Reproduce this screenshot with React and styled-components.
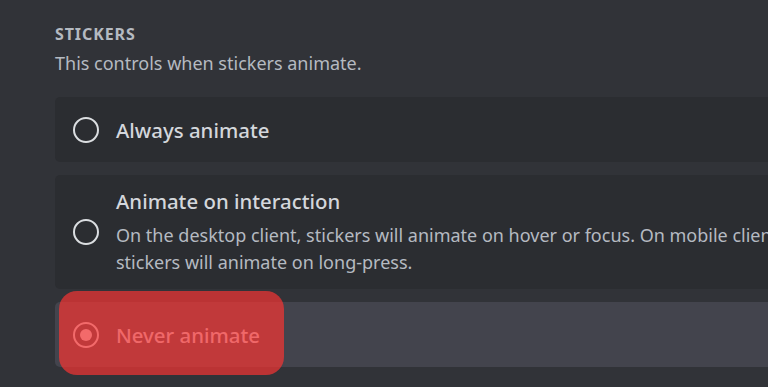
import React from "react";
import styled, { createGlobalStyle } from "styled-components";

const GlobalStyle = createGlobalStyle`
  html, body {
    margin: 0;
    padding: 0;
    background: #313338;
    overflow: hidden;
  }
  body {
    font-family: "Noto Sans", "Open Sans", sans-serif;
  }
`;

const options = [
  { id: "always", title: "Always animate" },
  {
    id: "interaction",
    title: "Animate on interaction",
    desc: "On the desktop client, stickers will animate on hover or focus. On mobile clients, stickers will animate on long-press.",
  },
  { id: "never", title: "Never animate", selected: true, marked: true },
];

const App = () => {
  return (
    <>
      <GlobalStyle />
      <Page>
        <Heading>Stickers</Heading>
        <Description>This controls when stickers animate.</Description>
        <OptionList>
          {options.map((o) => (
            <Option key={o.id} $selected={o.selected} $tall={!!o.desc}>
              <Radio $selected={o.selected}>{o.selected && <Dot />}</Radio>
              <OptionText>
                <OptionTitle>{o.title}</OptionTitle>
                {o.desc && <OptionDesc>{o.desc}</OptionDesc>}
              </OptionText>
              {o.marked && <Highlight />}
            </Option>
          ))}
        </OptionList>
      </Page>
    </>
  );
};

const Page = styled.div`
  width: 768px;
  height: 387px;
  box-sizing: border-box;
  padding: 24px 0 0 55px;
  overflow: hidden;
`;

const Heading = styled.h2`
  margin: 0;
  font-size: 16px;
  font-weight: 700;
  text-transform: uppercase;
  letter-spacing: 0.9px;
  color: #b5bac1;
  line-height: 20px;
`;

const Description = styled.div`
  margin-top: 7px;
  font-size: 18px;
  line-height: 24px;
  color: #b5bac1;
`;

const OptionList = styled.div`
  margin-top: 22px;
  display: flex;
  flex-direction: column;
  gap: 13px;
  width: 760px;
`;

const Option = styled.div`
  position: relative;
  display: flex;
  align-items: center;
  gap: 17px;
  box-sizing: border-box;
  min-height: ${(p) => (p.$tall ? "114px" : "65px")};
  padding: 0 18px;
  border-radius: 5px;
  background: ${(p) => (p.$selected ? "#43444d" : "#2b2d31")};
`;

const Radio = styled.div`
  flex: none;
  width: 26px;
  height: 26px;
  box-sizing: border-box;
  border-radius: 50%;
  border: 2.5px solid #dbdee1;
  display: flex;
  align-items: center;
  justify-content: center;
`;

const Dot = styled.div`
  width: 12px;
  height: 12px;
  border-radius: 50%;
  background: #dbdee1;
`;

const OptionText = styled.div`
  display: flex;
  flex-direction: column;
  gap: 8px;
  min-width: 0;
`;

const OptionTitle = styled.div`
  font-size: 20.4px;
  font-weight: 500;
  line-height: 26px;
  color: #d4d7dc;
  white-space: nowrap;
`;

const OptionDesc = styled.div`
  font-size: 18px;
  line-height: 27px;
  color: #b5bac1;
  width: 720px;
`;

const Highlight = styled.div`
  position: absolute;
  left: 4px;
  top: -11px;
  width: 225px;
  bottom: -8px;
  border-radius: 18px;
  background: rgba(254, 52, 50, 0.68);
  pointer-events: none;
`;

export default App;
